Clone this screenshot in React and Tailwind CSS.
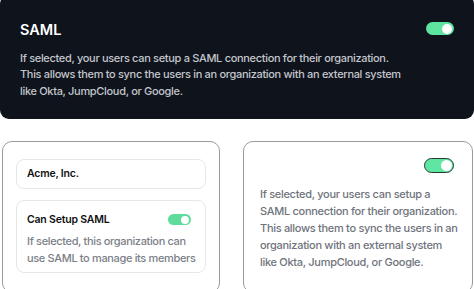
export default function App() {
  return (
    <div className="w-[474px] h-[289px] overflow-hidden bg-white font-['Inter',sans-serif]">
      <div className="-mt-[5px] h-[124px] rounded-[9px] bg-[#0f131c] px-5 pt-[22px]">
        <div className="flex items-center justify-between">
          <h2 className="pt-[2px] text-[14.5px] font-semibold text-white">SAML</h2>
          <Toggle />
        </div>
        <p className="mt-[9px] whitespace-nowrap text-[11px] tracking-[-0.32px] leading-[16.5px] text-[#c3c6cc] font-medium">
          If selected, your users can setup a SAML connection for their organization.
          <br />
          This allows them to sync the users in an organization with an external system
          <br />
          like Okta, JumpCloud, or Google.
        </p>
      </div>

      <div className="mt-[22px] flex gap-[23px] pl-[2px]">
        <div className="w-[218px] h-[152px] shrink-0 rounded-[10px] border border-[#9a9a9a] px-[13px] pt-[17px]">
          <div className="h-[30px] rounded-[8px] border border-[#e6e7ea] px-[10px] flex items-center text-[10.5px] tracking-[-0.2px] font-semibold text-[#111]">
            Acme, Inc.
          </div>
          <div className="mt-[11px] rounded-[8px] border border-[#e6e7ea] px-[10px] pt-[11px] pb-[5px]">
            <div className="flex items-center justify-between pr-[4px]">
              <span className="text-[10.5px] tracking-[-0.2px] font-semibold text-[#111]">Can Setup SAML</span>
              <span className="relative inline-block h-[11px] w-[23px] rounded-full bg-[#5fdc9c]">
                <span className="absolute right-[2px] top-[1.5px] h-[8px] w-[8px] rounded-full bg-white" />
              </span>
            </div>
            <p className="mt-[5px] whitespace-nowrap text-[11px] tracking-[-0.35px] leading-[17px] font-medium text-[#7b7f88]">
              If selected, this organization can
              <br />
              use SAML to manage its members
            </p>
          </div>
        </div>
        <div className="w-[230px] h-[152px] shrink-0 rounded-[10px] border border-[#9a9a9a] pl-[16px] pr-[18px] pt-[16px]">
          <div className="flex justify-end">
            <span className="relative inline-block h-[15px] w-[30px] rounded-full border border-[#2a3a33] bg-[#5fe6a3]">
              <span className="absolute right-[1px] top-[1px] h-[11px] w-[11px] rounded-full bg-white" />
            </span>
          </div>
          <p className="mt-[13px] whitespace-nowrap text-[11px] tracking-[-0.3px] leading-[17px] font-medium text-[#6f737c]">
            If selected, your users can setup a
            <br />
            SAML connection for their organization.
            <br />
            This allows them to sync the users in an
            <br />
            organization with an external system
            <br />
            like Okta, JumpCloud, or Google.
          </p>
        </div>
      </div>
    </div>
  );
}

function Toggle() {
  return (
    <span className="relative inline-block h-[13px] w-[28px] rounded-full bg-[#5ee3a1]">
      <span className="absolute right-[2px] top-[1.5px] h-[10px] w-[10px] rounded-full bg-white" />
    </span>
  );
}
